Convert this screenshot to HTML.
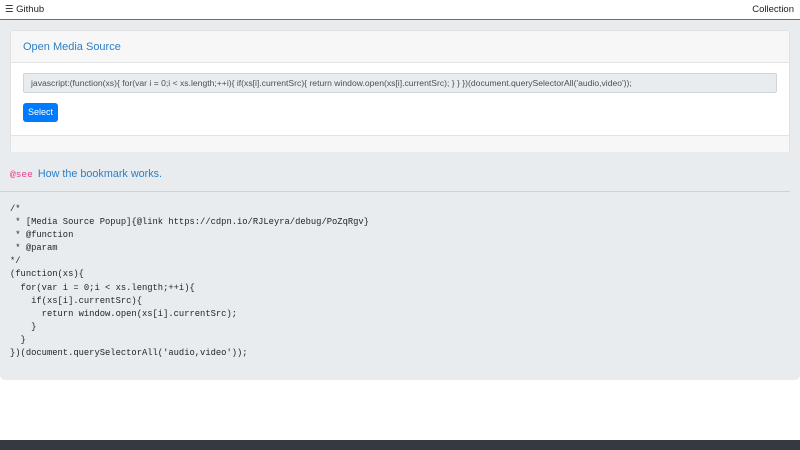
<!DOCTYPE html>
<html><head><style>
body{margin:0;width:800px;height:450px;position:relative;background:#fff;font-family:"Liberation Sans",sans-serif;overflow:hidden}
.nav{position:absolute;top:0;left:0;right:0;height:19px;border-bottom:1px solid #6c6c6c;font-size:9.5px;color:#222}
.nav .l{position:absolute;left:5px;top:4px}.nav .r{position:absolute;right:6px;top:4px}
.jumbo{position:absolute;top:20px;left:0;width:800px;height:360px;background:#e9ecef;border-radius:0 0 5px 5px}
.card{position:absolute;left:10px;top:30px;width:778px;height:120px;border:1px solid #dfe1e3;background:#fff;border-radius:3px}
.ch{height:31px;background:#f7f7f7;border-bottom:1px solid #e3e3e3}
.ch span{position:absolute;left:12px;top:10px;color:#2a7fc9;font-size:11px}
.inp{position:absolute;left:12px;top:42px;width:745px;height:18px;background:#e9ecef;border:1px solid #ced4da;border-radius:2px;font-size:8.6px;color:#495057;line-height:18px;padding-left:7px;white-space:nowrap;overflow:hidden}
.btn{position:absolute;left:12px;top:72px;width:35px;height:19px;background:#007bff;border-radius:3px;color:#fff;font-size:9px;text-align:center;line-height:19px}
.cf{position:absolute;left:0;right:0;top:104px;height:16px;background:#f7f7f7;border-top:1px solid #e3e3e3}
.see{position:absolute;left:10px;top:168px;font-size:10.8px;color:#2a7fc9}
.see code{font-family:"Liberation Mono",monospace;color:#e83e8c;font-size:9.5px;margin-right:5px}
.hr{position:absolute;left:0;right:10px;top:191px;border-top:1px solid #cfd2d5}
pre{position:absolute;left:10px;top:203px;margin:0;font-family:"Liberation Mono",monospace;font-size:8.8px;line-height:13.1px;color:#212529}
.foot{position:absolute;left:0;right:0;top:440px;height:10px;background:#343a40}
</style></head><body>
<div class="nav"><span class="l">☰ Github</span><span class="r">Collection</span></div>
<div class="jumbo"></div>
<div class="card"><div class="ch"><span>Open Media Source</span></div>
<div class="inp">javascript:(function(xs){ for(var i = 0;i &lt; xs.length;++i){ if(xs[i].currentSrc){ return window.open(xs[i].currentSrc); } } })(document.querySelectorAll('audio,video'));</div>
<div class="btn">Select</div><div class="cf"></div></div>
<div class="see"><code>@see</code>How the bookmark works.</div>
<div class="hr"></div>
<pre>/*
 * [Media Source Popup]{@link https://cdpn.io/RJLeyra/debug/PoZqRgv}
 * @function
 * @param
*/
(function(xs){
  for(var i = 0;i &lt; xs.length;++i){
    if(xs[i].currentSrc){
      return window.open(xs[i].currentSrc);
    }
  }
})(document.querySelectorAll('audio,video'));</pre>
<div class="foot"></div>
</body></html>
